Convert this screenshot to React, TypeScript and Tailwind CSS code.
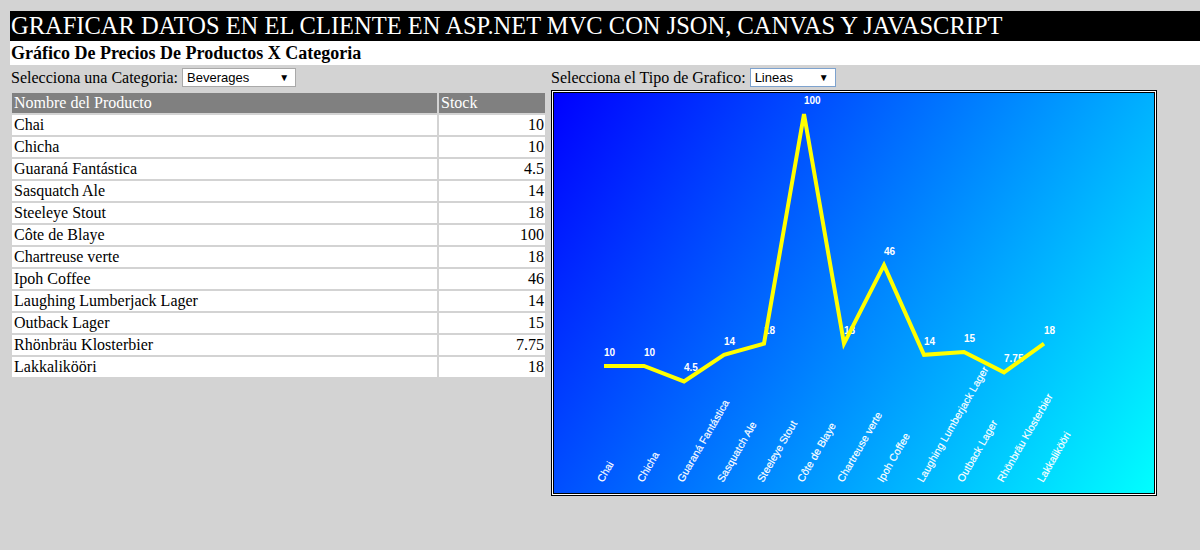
const productos = [
  { nombre: 'Chai', stock: '10', v: 10 },
  { nombre: 'Chicha', stock: '10', v: 10 },
  { nombre: 'Guaraná Fantástica', stock: '4.5', v: 4.5 },
  { nombre: 'Sasquatch Ale', stock: '14', v: 14 },
  { nombre: 'Steeleye Stout', stock: '18', v: 18 },
  { nombre: 'Côte de Blaye', stock: '100', v: 100 },
  { nombre: 'Chartreuse verte', stock: '18', v: 18 },
  { nombre: 'Ipoh Coffee', stock: '46', v: 46 },
  { nombre: 'Laughing Lumberjack Lager', stock: '14', v: 14 },
  { nombre: 'Outback Lager', stock: '15', v: 15 },
  { nombre: 'Rhönbräu Klosterbier', stock: '7.75', v: 7.75 },
  { nombre: 'Lakkalikööri', stock: '18', v: 18 },
];

function FakeSelect({ value, width, focused }: { value: string; width: string; focused?: boolean }) {
  return (
    <div
      className={`${width} h-[19px] bg-white border flex items-center justify-between pl-[4px] pr-[6px] font-['Liberation_Sans',sans-serif] text-[13px] leading-none text-black ${
        focused ? 'border-[#7da2ce]' : 'border-[#a9a9a9]'
      }`}
    >
      <span>{value}</span>
      <span className="text-[10px]">▼</span>
    </div>
  );
}

function Grafico() {
  const px = (i: number) => 50 + 40 * i;
  const py = (v: number) => 301 - 2.8 * v;
  const puntos = productos.map((p, i) => `${px(i)},${py(p.v)}`).join(' ');
  return (
    <div className="border border-black bg-white p-px">
      <div className="border border-black">
        <svg width="600" height="400" className="block">
          <defs>
            <linearGradient id="fondo" gradientUnits="userSpaceOnUse" x1="0" y1="0" x2="600" y2="400">
              <stop offset="0" stopColor="#0000ff" />
              <stop offset="1" stopColor="#00ffff" />
            </linearGradient>
          </defs>
          <rect width="600" height="400" fill="url(#fondo)" />
          {productos.map((p, i) => (
            <text
              key={'v' + i}
              x={px(i)}
              y={py(p.v) - 10}
              fill="#fff"
              fontSize="10"
              fontWeight="bold"
              fontFamily="Liberation Sans, Arial, sans-serif"
            >
              {p.stock}
            </text>
          ))}
          {productos.map((p, i) => (
            <text
              key={'n' + i}
              transform={`translate(${px(i) - 1},390) rotate(-60)`}
              fill="#fff"
              stroke="#fff"
              strokeWidth="0.15"
              fontSize="10.6"
              fontFamily="Liberation Sans, Arial, sans-serif"
            >
              {p.nombre}
            </text>
          ))}
          <polyline points={puntos} fill="none" stroke="#ffff00" strokeWidth="4" strokeLinejoin="miter" />
        </svg>
      </div>
    </div>
  );
}

export default function App() {
  return (
    <div className="min-h-[550px] bg-[#d3d3d3] pt-[11px] pl-[10px] font-['Liberation_Serif',serif] text-black">
      <h1 className="h-[30px] bg-black text-white text-[24.5px] leading-[30px] pl-px whitespace-nowrap overflow-hidden">
        GRAFICAR DATOS EN EL CLIENTE EN ASP.NET MVC CON JSON, CANVAS Y JAVASCRIPT
      </h1>
      <h2 className="h-[24px] bg-white text-[18px] font-bold leading-[24px] pl-px">
        Gráfico De Precios De Productos X Categoria
      </h2>
      <div className="flex">
        <div className="w-[541px]">
          <div className="h-[25px] flex items-center gap-[4px] pl-px text-[16px]">
            <span>Selecciona una Categoria:</span>
            <FakeSelect value="Beverages" width="w-[114px]" />
          </div>
          <table className="mt-px w-[537px] table-fixed border-separate border-spacing-[2px] text-[16px] leading-[20px]">
            <thead>
              <tr className="bg-[#808080] text-white">
                <th className="w-[425px] h-[20px] pl-[2px] text-left font-normal">Nombre del Producto</th>
                <th className="h-[20px] pl-[2px] text-left font-normal">Stock</th>
              </tr>
            </thead>
            <tbody>
              {productos.map((p) => (
                <tr key={p.nombre} className="bg-white">
                  <td className="h-[20px] pl-[2px]">{p.nombre}</td>
                  <td className="h-[20px] pr-px text-right">{p.stock}</td>
                </tr>
              ))}
            </tbody>
          </table>
        </div>
        <div>
          <div className="h-[25px] flex items-center gap-[4px] text-[16px]">
            <span>Selecciona el Tipo de Grafico:</span>
            <FakeSelect value="Lineas" width="w-[86px]" focused />
          </div>
          <Grafico />
        </div>
      </div>
    </div>
  );
}
